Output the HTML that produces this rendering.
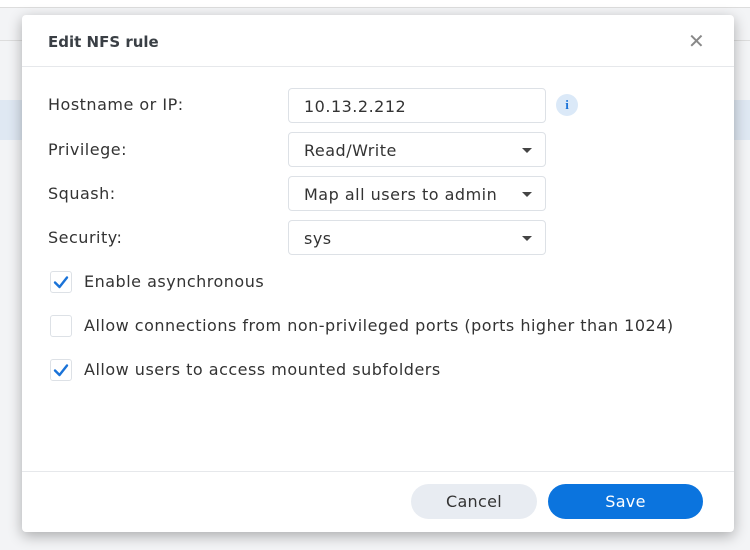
<!DOCTYPE html>
<html><head><style>
*{box-sizing:border-box;margin:0;padding:0}
body{width:750px;height:550px;overflow:hidden;background:#f3f4f6;position:relative;font-family:"DejaVu Sans","Liberation Sans",sans-serif;color:#333}
.bg1{position:absolute;left:0;top:0;width:750px;height:8px;background:#fff;border-bottom:1px solid #ddd}
.bg2{position:absolute;left:0;top:100px;width:750px;height:40px;background:#dfe8f3}
.bg3{position:absolute;left:0;top:40px;width:750px;height:1px;background:#ddd}
.dlg{position:absolute;left:22px;top:15px;width:712px;height:517px;background:#fff;border-radius:4px;box-shadow:0 4px 14px rgba(0,0,0,.3)}
.title{position:absolute;left:26px;top:18px;font-size:15px;font-weight:bold;color:#3a3f45}
.x{position:absolute;left:666px;top:14px;font-size:20px;color:#888;font-family:"Liberation Sans",sans-serif}
.hl{position:absolute;left:0;top:51px;width:712px;height:1px;background:#e6e8eb}
.fl{position:absolute;left:0;top:456px;width:712px;height:1px;background:#e6e8eb}
.lbl{position:absolute;left:26px;font-size:16px;letter-spacing:.5px;color:#333}
.inp{position:absolute;left:266px;width:258px;height:35px;border:1px solid #dde1e6;border-radius:4px;font-size:16px;letter-spacing:.5px;padding:8px 0 0 15px;color:#333}
.arr{position:absolute;right:13px;top:15px;width:0;height:0;border-left:5px solid transparent;border-right:5px solid transparent;border-top:5px solid #444}
.info{position:absolute;left:534px;top:79px;width:22px;height:22px;border-radius:50%;background:#dbe9f8;color:#1d74d8;font-size:13px;font-weight:bold;text-align:center;line-height:22px;font-family:"Liberation Serif",serif}
.cb{position:absolute;left:28px;width:22px;height:22px;border:1px solid #dde1e6;border-radius:3px;background:#fff}
.cbt{position:absolute;left:62px;font-size:16px;letter-spacing:.5px;color:#333}
.btn{position:absolute;top:469px;height:35px;border-radius:18px;font-size:16px;letter-spacing:.3px;text-align:center;line-height:35px}
</style></head><body>
<div class="bg1"></div><div class="bg3"></div><div class="bg2"></div>
<div class="dlg">
<div class="title">Edit NFS rule</div>
<div class="x">✕</div>
<div class="hl"></div>
<div class="lbl" style="top:80px">Hostname or IP:</div>
<div class="inp" style="top:73px">10.13.2.212</div>
<div class="info">i</div>
<div class="lbl" style="top:125px">Privilege:</div>
<div class="inp" style="top:117px">Read/Write<div class="arr"></div></div>
<div class="lbl" style="top:169px">Squash:</div>
<div class="inp" style="top:161px">Map all users to admin<div class="arr"></div></div>
<div class="lbl" style="top:213px">Security:</div>
<div class="inp" style="top:205px">sys<div class="arr"></div></div>
<div class="cb" style="top:256px"><svg width="20" height="20" viewBox="0 0 20 20"><path d="M4 10.5 L8.5 15 L16 5.5" fill="none" stroke="#1a73d8" stroke-width="2.4" stroke-linecap="round" stroke-linejoin="round"/></svg></div>
<div class="cbt" style="top:257px">Enable asynchronous</div>
<div class="cb" style="top:300px"></div>
<div class="cbt" style="top:301px">Allow connections from non-privileged ports (ports higher than 1024)</div>
<div class="cb" style="top:344px"><svg width="20" height="20" viewBox="0 0 20 20"><path d="M4 10.5 L8.5 15 L16 5.5" fill="none" stroke="#1a73d8" stroke-width="2.4" stroke-linecap="round" stroke-linejoin="round"/></svg></div>
<div class="cbt" style="top:345px">Allow users to access mounted subfolders</div>
<div class="fl"></div>
<div class="btn" style="left:389px;width:126px;background:#e8ecf2;color:#333">Cancel</div>
<div class="btn" style="left:526px;width:155px;background:#0b74de;color:#fff">Save</div>
</div>
</body></html>
